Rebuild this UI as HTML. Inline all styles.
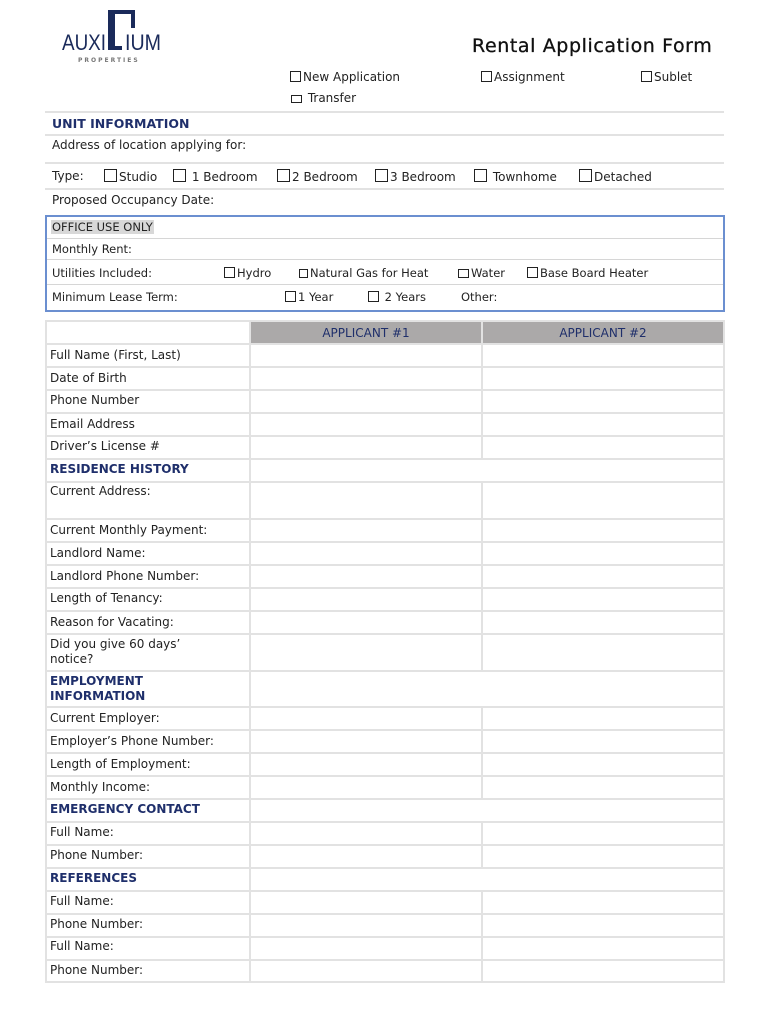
<!DOCTYPE html>
<html><head><meta charset="utf-8"><style>
*{margin:0;padding:0;box-sizing:border-box}
body{width:770px;height:1024px;background:#fff;position:relative;font-family:"DejaVu Sans","Liberation Sans",sans-serif;font-size:12px;color:#222;overflow:hidden}
.a{position:absolute;white-space:nowrap}
.cb{display:inline-block;width:11px;height:11px;border:1px solid #222;vertical-align:-1px;margin-right:2px}
.h{color:#1f2f6b;font-weight:bold}
.hl{position:absolute;left:45px;width:679px;height:0;border-top:2px solid #e2e2e2}
.ol{position:absolute;left:47px;width:676px;border-top:1px solid #d6d6d6}
.vl{position:absolute;border-left:2px solid #e2e2e2}
</style></head><body>
<!-- logo -->
<svg class="a" style="left:60px;top:6px" width="110" height="62">
<rect x="48" y="4" width="7" height="40" fill="#1a2a5a"/>
<rect x="48" y="4" width="27" height="4" fill="#1a2a5a"/>
<rect x="71" y="4" width="4" height="18" fill="#1a2a5a"/>
<rect x="48" y="40" width="14" height="4" fill="#1a2a5a"/>
<text x="2" y="44" font-family="Liberation Sans,sans-serif" font-size="22" fill="#1a2a5a" textLength="44" lengthAdjust="spacingAndGlyphs">AUXI</text>
<text x="65" y="44" font-family="Liberation Sans,sans-serif" font-size="22" fill="#1a2a5a" textLength="36" lengthAdjust="spacingAndGlyphs">IUM</text>
<text x="18" y="56" font-size="6" fill="#777" letter-spacing="2" font-weight="bold">PROPERTIES</text>
</svg>
<div class="a" style="left:472px;top:35px;font-size:19px;letter-spacing:0.6px;color:#111;-webkit-text-stroke:0.3px #111">Rental Application Form</div>
<div class="a" style="left:290px;top:70px"><span class="cb"></span>New Application</div>
<div class="a" style="left:481px;top:70px"><span class="cb"></span>Assignment</div>
<div class="a" style="left:641px;top:70px"><span class="cb"></span>Sublet</div>
<div class="a" style="left:291px;top:91px"><span class="cb" style="height:8px"></span> Transfer</div>

<div class="hl" style="top:111px"></div>
<div class="a h" style="left:52px;top:116px;font-size:12.5px">UNIT INFORMATION</div>
<div class="hl" style="top:134px"></div>
<div class="a" style="left:52px;top:138px">Address of location applying for:</div>
<div class="hl" style="top:162px"></div>
<div class="a" style="left:52px;top:169px">Type:</div>
<div class="a" style="left:104px;top:169px"><span class="cb" style="width:13px;height:13px"></span>Studio</div>
<div class="a" style="left:173px;top:169px"><span class="cb" style="width:13px;height:13px"></span> 1 Bedroom</div>
<div class="a" style="left:277px;top:169px"><span class="cb" style="width:13px;height:13px"></span>2 Bedroom</div>
<div class="a" style="left:375px;top:169px"><span class="cb" style="width:13px;height:13px"></span>3 Bedroom</div>
<div class="a" style="left:474px;top:169px"><span class="cb" style="width:13px;height:13px"></span> Townhome</div>
<div class="a" style="left:579px;top:169px"><span class="cb" style="width:13px;height:13px"></span>Detached</div>
<div class="hl" style="top:188px"></div>
<div class="a" style="left:52px;top:193px">Proposed Occupancy Date:</div>

<div class="a" style="left:45px;top:215px;width:680px;height:97px;border:2px solid #6b8fd0"></div>
<div class="a" style="left:51px;top:220px;background:#d8d8d8;font-size:11.5px;padding:0 1px">OFFICE USE ONLY</div>
<div class="ol" style="top:238px"></div>
<div class="a" style="left:52px;top:242px;font-size:11.5px">Monthly Rent:</div>
<div class="ol" style="top:259px"></div>
<div class="a" style="left:52px;top:266px;font-size:11.5px">Utilities Included:</div>
<div class="a" style="left:224px;top:266px;font-size:11.5px"><span class="cb"></span>Hydro</div>
<div class="a" style="left:299px;top:266px;font-size:11.5px"><span class="cb" style="width:9px;height:9px"></span>Natural Gas for Heat</div>
<div class="a" style="left:458px;top:266px;font-size:11.5px"><span class="cb" style="width:11px;height:9px"></span>Water</div>
<div class="a" style="left:527px;top:266px;font-size:11.5px"><span class="cb"></span>Base Board Heater</div>
<div class="ol" style="top:284px"></div>
<div class="a" style="left:52px;top:290px;font-size:11.5px">Minimum Lease Term:</div>
<div class="a" style="left:285px;top:290px;font-size:11.5px"><span class="cb"></span>1 Year</div>
<div class="a" style="left:368px;top:290px;font-size:11.5px"><span class="cb"></span> 2 Years</div>
<div class="a" style="left:461px;top:290px;font-size:11.5px">Other:</div>

<!-- table -->
<div class="a" style="left:250px;top:321px;width:474px;height:23px;background:#aba9a9"></div>
<div class="a h" style="left:250px;top:326px;width:232px;text-align:center;font-weight:normal">APPLICANT #1</div>
<div class="a h" style="left:482px;top:326px;width:242px;text-align:center;font-weight:normal">APPLICANT #2</div>
<div class="hl" style="top:320px"></div>
<div class="vl" style="left:45px;top:320px;height:663px"></div>
<div class="vl" style="left:723px;top:320px;height:663px"></div>
<div class="vl" style="left:249px;top:320px;height:663px"></div>
<div class="vl" style="left:481px;top:320px;height:139px"></div>
<div class="vl" style="left:481px;top:481px;height:190px"></div>
<div class="vl" style="left:481px;top:706px;height:93px"></div>
<div class="vl" style="left:481px;top:821px;height:47px"></div>
<div class="vl" style="left:481px;top:890px;height:93px"></div>

<div class="hl" style="top:343px"></div><div class="a" style="left:50px;top:348px">Full Name (First, Last)</div>
<div class="hl" style="top:366px"></div><div class="a" style="left:50px;top:371px">Date of Birth</div>
<div class="hl" style="top:389px"></div><div class="a" style="left:50px;top:393px">Phone Number</div>
<div class="hl" style="top:412px"></div><div class="a" style="left:50px;top:417px">Email Address</div>
<div class="hl" style="top:435px"></div><div class="a" style="left:50px;top:439px">Driver’s License #</div>
<div class="hl" style="top:458px"></div><div class="a h" style="left:50px;top:462px">RESIDENCE HISTORY</div>
<div class="hl" style="top:481px"></div><div class="a" style="left:50px;top:484px">Current Address:</div>
<div class="hl" style="top:518px"></div><div class="a" style="left:50px;top:523px">Current Monthly Payment:</div>
<div class="hl" style="top:541px"></div><div class="a" style="left:50px;top:546px">Landlord Name:</div>
<div class="hl" style="top:564px"></div><div class="a" style="left:50px;top:569px">Landlord Phone Number:</div>
<div class="hl" style="top:587px"></div><div class="a" style="left:50px;top:591px">Length of Tenancy:</div>
<div class="hl" style="top:610px"></div><div class="a" style="left:50px;top:615px">Reason for Vacating:</div>
<div class="hl" style="top:633px"></div><div class="a" style="left:50px;top:637px;line-height:15px">Did you give 60 days’<br>notice?</div>
<div class="hl" style="top:670px"></div><div class="a h" style="left:50px;top:674px;line-height:15px">EMPLOYMENT<br>INFORMATION</div>
<div class="hl" style="top:706px"></div><div class="a" style="left:50px;top:711px">Current Employer:</div>
<div class="hl" style="top:729px"></div><div class="a" style="left:50px;top:734px">Employer’s Phone Number:</div>
<div class="hl" style="top:752px"></div><div class="a" style="left:50px;top:757px">Length of Employment:</div>
<div class="hl" style="top:775px"></div><div class="a" style="left:50px;top:780px">Monthly Income:</div>
<div class="hl" style="top:798px"></div><div class="a h" style="left:50px;top:802px">EMERGENCY CONTACT</div>
<div class="hl" style="top:821px"></div><div class="a" style="left:50px;top:825px">Full Name:</div>
<div class="hl" style="top:844px"></div><div class="a" style="left:50px;top:848px">Phone Number:</div>
<div class="hl" style="top:867px"></div><div class="a h" style="left:50px;top:871px">REFERENCES</div>
<div class="hl" style="top:890px"></div><div class="a" style="left:50px;top:894px">Full Name:</div>
<div class="hl" style="top:913px"></div><div class="a" style="left:50px;top:917px">Phone Number:</div>
<div class="hl" style="top:936px"></div><div class="a" style="left:50px;top:939px">Full Name:</div>
<div class="hl" style="top:959px"></div><div class="a" style="left:50px;top:963px">Phone Number:</div>
<div class="hl" style="top:981px"></div>
</body></html>
